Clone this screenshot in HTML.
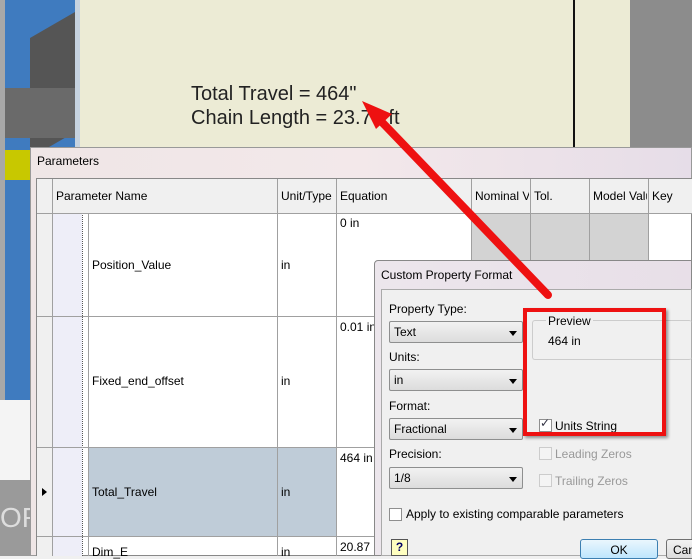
<!DOCTYPE html>
<html><head><style>
*{margin:0;padding:0;box-sizing:border-box}
body{width:692px;height:556px;overflow:hidden;position:relative;background:#f0f0f0;font-family:"Liberation Sans",sans-serif;font-size:12px;color:#000}
.a{position:absolute}
.t{position:absolute;white-space:nowrap}
.combo{position:absolute;left:389px;width:134px;height:22px;border:1px solid #8e8f8f;border-radius:2px;background:linear-gradient(#f2f2f2,#dcdcdc);padding:3px 4px;font-size:12px}
.combo:after{content:"";position:absolute;right:5px;top:9px;border:4px solid transparent;border-top:5px solid #000}
.cb{position:absolute;width:13px;height:13px;border:1px solid #8f8f8f;background:#fff}
.vl{position:absolute;width:1px;background:#a0a0a0}
.hl{position:absolute;height:1px;background:#a0a0a0}
</style></head><body>
<!-- left background -->
<div class="a" style="left:0;top:0;width:5px;height:556px;background:#a8a8a8"></div>
<div class="a" style="left:5px;top:0;width:70px;height:400px;background:#3f7bbf"></div>
<div class="a" style="left:30px;top:25px;width:45px;height:120px;background:#555;transform:skewY(-30deg)"></div>
<div class="a" style="left:5px;top:88px;width:70px;height:50px;background:#6a6a6a"></div>
<div class="a" style="left:5px;top:150px;width:30px;height:30px;background:#c8c800"></div>
<div class="a" style="left:0;top:400px;width:35px;height:80px;background:#f4f4f4"></div>
<div class="a" style="left:0;top:480px;width:35px;height:76px;background:#9a9a9a"></div>
<div class="t" style="left:0;top:502px;font-size:28px;color:#ddd">OR</div>
<!-- drawing sheet -->
<div class="a" style="left:75px;top:0;width:5px;height:147px;background:#c6d3e0"></div>
<div class="a" style="left:80px;top:0;width:555px;height:147px;background:#ecebd5"></div>
<div class="a" style="left:573px;top:0;width:2px;height:147px;background:#111"></div>
<div class="a" style="left:630px;top:0;width:62px;height:147px;background:#8c8c8c"></div>
<div class="t" style="left:191px;top:83px;font-size:20px;color:#222">Total Travel = 464"</div>
<div class="t" style="left:191px;top:107px;font-size:20px;color:#222">Chain Length = 23.75 ft</div>
<!-- parameters window -->
<div class="a" style="left:30px;top:147px;width:662px;height:409px;background:linear-gradient(90deg,#efe6e6,#f3e8ea 50%,#e6dde8);border:1px solid #999"></div>
<div class="t" style="left:37px;top:154px;font-size:12px">Parameters</div>
<div class="a" style="left:36px;top:178px;width:656px;height:378px;background:#fff;border:1px solid #888"></div>
<div class="a" style="left:37px;top:179px;width:655px;height:34px;background:#f0f0f0"></div>
<div class="a" style="left:37px;top:213px;width:15px;height:343px;background:#f0f0f0"></div>
<div class="a" style="left:52px;top:213px;width:30px;height:343px;background:#eeeef8"></div>
<div class="a" style="left:82px;top:213px;width:1px;height:343px;border-left:1px dotted #555"></div>
<div class="a" style="left:88px;top:447px;width:248px;height:89px;background:#bfccd8"></div>
<div class="a" style="left:471px;top:213px;width:177px;height:103px;background:#d3d3d3"></div>
<div class="hl" style="left:37px;top:213px;width:655px"></div>
<div class="hl" style="left:37px;top:316px;width:655px"></div>
<div class="hl" style="left:37px;top:447px;width:655px"></div>
<div class="hl" style="left:37px;top:536px;width:655px"></div>
<div class="vl" style="left:52px;top:179px;height:377px"></div>
<div class="vl" style="left:88px;top:213px;height:343px"></div>
<div class="vl" style="left:277px;top:179px;height:377px"></div>
<div class="vl" style="left:336px;top:179px;height:377px"></div>
<div class="vl" style="left:471px;top:179px;height:377px"></div>
<div class="vl" style="left:530px;top:179px;height:377px"></div>
<div class="vl" style="left:589px;top:179px;height:377px"></div>
<div class="vl" style="left:648px;top:179px;height:377px"></div>
<div class="t" style="left:56px;top:189px">Parameter Name</div>
<div class="t" style="left:281px;top:189px;width:54px;overflow:hidden">Unit/Type</div>
<div class="t" style="left:340px;top:189px">Equation</div>
<div class="t" style="left:475px;top:189px;width:54px;overflow:hidden">Nominal Value</div>
<div class="t" style="left:534px;top:189px">Tol.</div>
<div class="t" style="left:593px;top:189px;width:54px;overflow:hidden">Model Value</div>
<div class="t" style="left:652px;top:189px">Key</div>
<div class="t" style="left:92px;top:258px">Position_Value</div><div class="t" style="left:281px;top:258px">in</div><div class="t" style="left:340px;top:216px">0 in</div>
<div class="t" style="left:92px;top:374px">Fixed_end_offset</div><div class="t" style="left:281px;top:374px">in</div><div class="t" style="left:340px;top:320px">0.01 in</div>
<div class="t" style="left:92px;top:485px">Total_Travel</div><div class="t" style="left:281px;top:485px">in</div><div class="t" style="left:340px;top:451px">464 in</div>
<div class="t" style="left:92px;top:545px">Dim_E</div><div class="t" style="left:281px;top:545px">in</div><div class="t" style="left:340px;top:540px">20.87</div>
<div class="a" style="left:42px;top:488px;border:4px solid transparent;border-left:5px solid #000"></div>
<!-- dialog -->
<div class="a" style="left:374px;top:260px;width:318px;height:296px;background:linear-gradient(90deg,#ece6ec,#e8dfe8);border:1px solid #888;border-radius:4px 0 0 0"></div>
<div class="t" style="left:381px;top:268px">Custom Property Format</div>
<div class="a" style="left:381px;top:289px;width:311px;height:267px;background:#f0f0f0;border:1px solid #aaa"></div>
<div class="t" style="left:389px;top:302px">Property Type:</div>
<div class="combo" style="top:321px">Text</div>
<div class="t" style="left:389px;top:350px">Units:</div>
<div class="combo" style="top:369px">in</div>
<div class="t" style="left:389px;top:399px">Format:</div>
<div class="combo" style="top:418px">Fractional</div>
<div class="t" style="left:389px;top:447px">Precision:</div>
<div class="combo" style="top:467px">1/8</div>
<div class="a" style="left:532px;top:320px;width:160px;height:40px;border:1px solid #ccc;border-right:none;border-radius:3px"></div>
<div class="t" style="left:546px;top:314px;background:#f0f0f0;padding:0 2px">Preview</div>
<div class="t" style="left:548px;top:334px">464 in</div>
<div class="cb" style="left:539px;top:419px"></div><div class="t" style="left:540px;top:416px;font-size:12px;color:#334">✓</div>
<div class="t" style="left:555px;top:419px">Units String</div>
<div class="cb" style="left:539px;top:447px;border-color:#ccc;background:#f4f4f4"></div><div class="t" style="left:555px;top:447px;color:#999">Leading Zeros</div>
<div class="cb" style="left:539px;top:474px;border-color:#ccc;background:#f4f4f4"></div><div class="t" style="left:555px;top:474px;color:#999">Trailing Zeros</div>
<div class="cb" style="left:389px;top:508px"></div><div class="t" style="left:406px;top:507px">Apply to existing comparable parameters</div>
<div class="a" style="left:391px;top:539px;width:17px;height:17px;border:1px solid #555;background:#ffffc0;font-weight:bold;text-align:center;font-size:12px;color:#006">?</div>
<div class="a" style="left:580px;top:539px;width:78px;height:20px;border:1px solid #3c7fb1;border-radius:3px;background:linear-gradient(#eaf6fd,#bee6fd);text-align:center;padding-top:3px">OK</div>
<div class="a" style="left:666px;top:539px;width:40px;height:20px;border:1px solid #707070;border-radius:3px;background:linear-gradient(#f2f2f2,#dcdcdc);padding:3px 0 0 6px">Cancel</div>
<!-- red box -->
<div class="a" style="left:523px;top:308px;width:143px;height:128px;border:4px solid #ee1111;box-shadow:2px 2px 3px rgba(0,0,0,.4)"></div>
<!-- arrow -->
<svg class="a" style="left:0;top:0" width="692" height="556">
<line x1="548" y1="295" x2="378" y2="118" stroke="#ee1111" stroke-width="8" stroke-linecap="round"/>
<polygon points="362,101 392,114 376,129" fill="#ee1111"/>
</svg>
</body></html>
